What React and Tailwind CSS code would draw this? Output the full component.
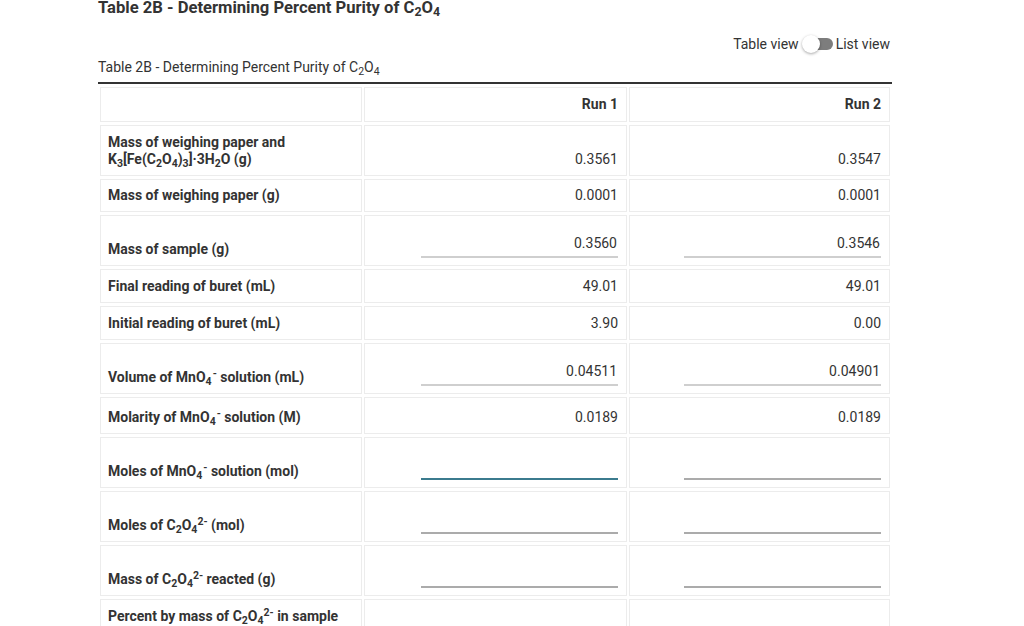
import React from "react";

const MnO4 = () => (
  <>
    MnO<sub>4</sub>
    <sup className="ml-[1px]">-</sup>
  </>
);

const C2O4 = ({ charge }) => (
  <>
    C<sub>2</sub>O<sub>4</sub>
    {charge && <sup>2-</sup>}
  </>
);

const rows = [
  {
    label: (
      <>
        Mass of weighing paper and
        <br />
        K<sub>3</sub>[Fe(C<sub>2</sub>O<sub>4</sub>)<sub>3</sub>]·3H<sub>2</sub>O (g)
      </>
    ),
    runs: ["0.3561", "0.3547"],
    h: "h-[51px]",
  },
  { label: "Mass of weighing paper (g)", runs: ["0.0001", "0.0001"], h: "h-[33px]" },
  { label: "Mass of sample (g)", runs: ["0.3560", "0.3546"], input: true },
  { label: "Final reading of buret (mL)", runs: ["49.01", "49.01"], h: "h-[34px]" },
  { label: "Initial reading of buret (mL)", runs: ["3.90", "0.00"], h: "h-[34px]" },
  {
    label: (
      <>
        Volume of <MnO4 /> solution (mL)
      </>
    ),
    runs: ["0.04511", "0.04901"],
    input: true,
  },
  {
    label: (
      <>
        Molarity of <MnO4 /> solution (M)
      </>
    ),
    runs: ["0.0189", "0.0189"],
    h: "h-[37px]",
  },
  {
    label: (
      <>
        Moles of <MnO4 /> solution (mol)
      </>
    ),
    runs: ["", ""],
    input: true,
    focus: 0,
  },
  {
    label: (
      <>
        Moles of <C2O4 charge /> (mol)
      </>
    ),
    runs: ["", ""],
    input: true,
  },
  {
    label: (
      <>
        Mass of <C2O4 charge /> reacted (g)
      </>
    ),
    runs: ["", ""],
    input: true,
  },
  {
    label: (
      <>
        Percent by mass of <C2O4 charge /> in sample (%)
      </>
    ),
    runs: ["", ""],
    input: true,
  },
];

const Cell = ({ children, className = "" }) => (
  <td
    className={
      "border border-[#ececec] align-bottom pl-[7px] pr-[8px] pt-[7px] pb-[7px] leading-[17px] " +
      className
    }
  >
    {children}
  </td>
);

const ValueInput = ({ value, focused }) => (
  <div className="flex justify-end">
    <div
      className={
        "w-[197px] h-[35px] flex items-end justify-end pb-[5px] leading-4 " +
        (focused
          ? "border-b-2 border-[#3b7b8e]"
          : value
          ? "border-b-2 border-[#cfcfcf]"
          : "border-b-2 border-[#ababab]")
      }
    >
      <span className="mr-[1px]">{value}</span>
    </div>
  </div>
);

export default function App() {
  return (
    <div
      className="min-h-screen bg-white text-[#333] pl-[98px]"
      style={{ fontFamily: "Roboto, 'Liberation Sans', sans-serif" }}
    >
      <div className="w-[792px]">
        <h1 className="text-[16.6px] font-bold leading-[16px]">
          Table 2B - Determining Percent Purity of <C2O4 />
        </h1>

        <div className="mt-[19px] flex items-center justify-end text-[14px] leading-[18px]">
          <span>Table view</span>
          <div className="relative ml-[3px] mr-[3px] w-[31px] h-[18px]">
            <div className="absolute left-[4px] right-0 top-[3px] bottom-[3px] rounded-full bg-[#7d7d7d]" />
            <div className="absolute left-0 top-0 w-[18px] h-[18px] rounded-full bg-white shadow-[0_1px_3px_rgba(0,0,0,0.35)]" />
          </div>
          <span>List view</span>
        </div>

        <div className="mt-[6px] text-[14px] leading-[17px]">
          Table 2B - Determining Percent Purity of <C2O4 />
        </div>

        <table className="mt-[6px] w-[792px] table-fixed border-separate border-spacing-x-[2px] border-spacing-y-[3px] border-t-2 border-[#333] text-[14px]">
          <colgroup>
            <col className="w-[262px]" />
            <col className="w-[263px]" />
            <col className="w-[261px]" />
          </colgroup>
          <thead>
            <tr>
              <Cell className="h-[35px]" />
              <Cell className="text-right font-bold align-middle">Run 1</Cell>
              <Cell className="text-right font-bold align-middle">Run 2</Cell>
            </tr>
          </thead>
          <tbody>
            {rows.map((row, i) => (
              <tr key={i}>
                <Cell className={"font-bold " + (row.h || "")}>{row.label}</Cell>
                {row.runs.map((v, j) => (
                  <Cell key={j} className="text-right">
                    {row.input ? (
                      <ValueInput value={v} focused={row.focus === j} />
                    ) : (
                      v
                    )}
                  </Cell>
                ))}
              </tr>
            ))}
          </tbody>
        </table>
      </div>
    </div>
  );
}
